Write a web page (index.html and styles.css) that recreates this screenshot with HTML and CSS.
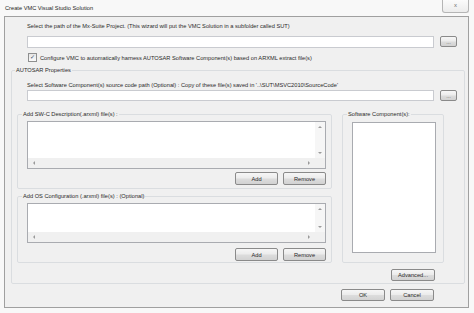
FILE: index.html
```html
<!DOCTYPE html>
<html lang="en">
  <head>
    <meta charset="UTF-8" />
    <title>Create VMC Visual Studio Solution</title>
    <link rel="stylesheet" href="styles.css">
  </head>
  <body>
    <div class="titlebar">
      <span class="title">Create VMC Visual Studio Solution</span>
      <span class="close">x</span>
    </div>

    <div class="dialog">
      <p class="hint top-hint">Select the path of the Mx-Suite Project. (This wizard will put the VMC Solution in a subfolder called SUT)</p>
      <div class="path-row top-path">
        <input type="text" class="path" />
        <button class="btn browse">...</button>
      </div>
      <label class="check">
        <span class="box">&#10003;</span>
        Configure VMC to automatically harness AUTOSAR Software Component(s) based on ARXML extract file(s)
      </label>

      <fieldset class="group autosar">
        <legend>AUTOSAR Properties</legend>
        <p class="hint">Select Software Component(s) source code path (Optional) : Copy of these file(s) saved in '..\SUT\MSVC2010\SourceCode'</p>
        <div class="path-row">
          <input type="text" class="path" />
          <button class="btn browse">...</button>
        </div>

        <div class="columns">
          <div class="file-groups">
            <fieldset class="group files swc-files">
              <legend>Add SW-C Description(.arxml) file(s) :</legend>
              <div class="listbox tall">
                <div class="list-area"></div>
                <div class="vscroll"><i class="arrow up"></i><i class="arrow down"></i></div>
                <div class="hscroll"><i class="arrow left"></i><i class="arrow right"></i></div>
                <div class="corner"></div>
              </div>
              <div class="btn-row">
                <button class="btn">Add</button>
                <button class="btn">Remove</button>
              </div>
            </fieldset>

            <fieldset class="group files os-files">
              <legend>Add OS Configuration (.arxml) file(s) : (Optional)</legend>
              <div class="listbox short">
                <div class="list-area"></div>
                <div class="vscroll"><i class="arrow up"></i><i class="arrow down"></i></div>
                <div class="hscroll"><i class="arrow left"></i><i class="arrow right"></i></div>
                <div class="corner"></div>
              </div>
              <div class="btn-row">
                <button class="btn">Add</button>
                <button class="btn">Remove</button>
              </div>
            </fieldset>
          </div>

          <fieldset class="group components">
            <legend>Software Component(s):</legend>
            <div class="component-list"></div>
          </fieldset>
        </div>

        <div class="advanced-row">
          <button class="btn">Advanced...</button>
        </div>
      </fieldset>

      <div class="footer">
        <button class="btn">OK</button>
        <button class="btn">Cancel</button>
      </div>
    </div>
  </body>
</html>
```

FILE: styles.css
```css
body {
  margin: 0;
  width: 474px;
  height: 313px;
  overflow: hidden;
  background-color: #f8f8f8;
  font-family: "Liberation Sans", Arial, sans-serif;
  font-size: 5.7px;
  color: #2a2a2a;
}

.titlebar {
  height: 16px;
  display: flex;
  justify-content: space-between;
  align-items: flex-start;
}

.title {
  margin: 4px 0 0 5px;
  font-size: 5.7px;
  line-height: 8px;
  color: #1e1e1e;
}

.close {
  width: 25px;
  height: 12px;
  margin-right: 5px;
  border: 1px solid #b5b5b5;
  border-top: none;
  border-radius: 0 0 3px 3px;
  background: linear-gradient(#fbfbfb, #ececec);
  font-size: 6px;
  line-height: 11px;
  text-align: center;
  color: #707070;
}

.dialog {
  margin-left: 4px;
  width: 465px;
  height: 292px;
  box-sizing: border-box;
  border: 1px solid #a0a0a0;
  background-color: #f0f0f0;
  padding: 5px 0 0 6px;
}

.hint {
  margin: 0;
  height: 8px;
  line-height: 8px;
  white-space: nowrap;
}

.top-hint {
  margin-left: 16px;
}

.path-row {
  display: flex;
  align-items: flex-start;
  gap: 6px;
}

.top-path {
  margin: 6px 0 0 16px;
}

.path {
  width: 407px;
  height: 12px;
  box-sizing: border-box;
  margin: 0;
  padding: 0;
  border: 1px solid #c9cbd0;
  background: #fff;
}

.btn {
  height: 13px;
  box-sizing: border-box;
  margin: 0;
  padding: 0;
  border: 1px solid #8a8a8a;
  border-radius: 2px;
  background: linear-gradient(#f6f6f6 0%, #ececec 45%, #dcdcdc 55%, #d2d2d2 100%);
  font-family: "Liberation Sans", Arial, sans-serif;
  font-size: 5.7px;
  color: #2a2a2a;
}

.browse {
  width: 17px;
  height: 11px;
  line-height: 6px;
  color: #666;
}

.check {
  display: flex;
  align-items: center;
  gap: 3px;
  height: 9px;
  margin: 5px 0 0 17px;
  white-space: nowrap;
}

.box {
  width: 7px;
  height: 7px;
  border: 1px solid #8e8f8f;
  background: linear-gradient(#e6e6e6, #fafafa);
  font-size: 6px;
  line-height: 7px;
  text-align: center;
  color: #3a4b6a;
}

.group {
  margin: 0;
  border: 1px solid #dadde0;
  border-radius: 2px;
  box-sizing: border-box;
}

.group legend {
  padding: 0 1px;
  line-height: 8px;
  height: 8px;
  white-space: nowrap;
}

.autosar {
  width: 454px;
  margin-top: 4px;
  padding: 7px 0 2px 5px;
}

.autosar > .hint,
.autosar > .path-row {
  margin-left: 10px;
}

.autosar > .path-row {
  margin-top: 1px;
}

.autosar > .path-row .path {
  height: 11px;
}

.autosar legend {
  margin-left: -2px;
}

.columns {
  display: flex;
  gap: 10px;
  margin-top: 9px;
}

.file-groups {
  display: flex;
  flex-direction: column;
  gap: 3px;
}

.files {
  width: 315px;
  padding: 3px 5px 3px 9px;
}

.files legend {
  margin-left: -5px;
}

.os-files {
  padding-bottom: 1px;
}

.listbox {
  width: 299px;
  box-sizing: border-box;
  border: 1px solid #a9abb0;
  background: #fff;
  display: grid;
  grid-template-columns: 1fr 10px;
  grid-template-rows: 1fr 10px;
}

.listbox.tall {
  height: 48px;
}

.listbox.short {
  height: 40px;
}

.vscroll {
  background: #f6f6f6;
  display: flex;
  flex-direction: column;
  justify-content: space-between;
  align-items: center;
  padding: 4px 0;
}

.hscroll {
  background: #f0f0f0;
  display: flex;
  justify-content: space-between;
  align-items: center;
  padding: 0 5px;
}

.corner {
  background: #f0f0f0;
}

.arrow {
  width: 0;
  height: 0;
  border: 2px solid transparent;
}

.arrow.up {
  border-bottom-color: #9a9a9a;
  border-top-width: 0;
}

.arrow.down {
  border-top-color: #9a9a9a;
  border-bottom-width: 0;
}

.arrow.left {
  border-right-color: #9a9a9a;
  border-left-width: 0;
}

.arrow.right {
  border-left-color: #9a9a9a;
  border-right-width: 0;
}

.btn-row {
  display: flex;
  justify-content: flex-end;
  gap: 5px;
  margin-top: 3px;
}

.btn-row .btn {
  width: 43px;
}

.os-files .btn-row {
  margin-top: 5px;
}

.components {
  width: 102px;
  padding: 4px 0 9px 9px;
}

.components legend {
  margin-left: -5px;
}

.component-list {
  width: 84px;
  height: 131px;
  box-sizing: border-box;
  border: 1px solid #a9abb0;
  background: #fff;
}

.advanced-row {
  display: flex;
  justify-content: flex-end;
  margin: 6px 29px 0 0;
}

.advanced-row .btn,
.footer .btn {
  width: 44px;
  height: 12px;
}

.footer {
  display: flex;
  justify-content: flex-end;
  gap: 5px;
  margin: 5px 34px 0 0;
}
```
